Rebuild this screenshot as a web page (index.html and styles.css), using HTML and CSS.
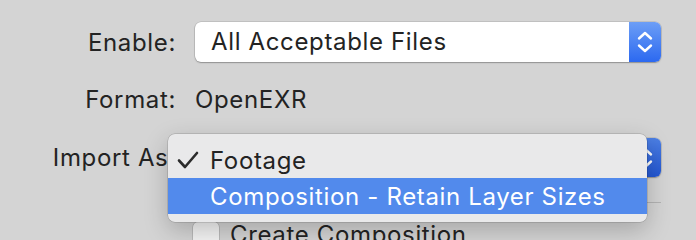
FILE: index.html
```html
<!DOCTYPE html>
<html>
<head>
<meta charset="utf-8">
<link rel="stylesheet" href="styles.css">
</head>
<body>
<div class="form">
  <div class="label">Enable:</div>
  <div class="popup">
    <div class="popup-value">All Acceptable Files</div>
    <div class="stepper">
      <svg width="16" height="22" viewBox="0 0 16 22"><path d="M2 7.5 L8 2 L14 7.5 M2 14.5 L8 20 L14 14.5" fill="none" stroke="#fff" stroke-width="2.4" stroke-linecap="round" stroke-linejoin="round"/></svg>
    </div>
  </div>

  <div class="label label-format">Format:</div>
  <div class="value">OpenEXR</div>

  <div class="label label-import">Import As:</div>
  <div class="popup-wrap">
    <div class="popup popup-dim">
      <div class="popup-value"></div>
      <div class="stepper stepper-dim">
        <svg width="16" height="22" viewBox="0 0 16 22"><path d="M2 7.5 L8 2 L14 7.5 M2 14.5 L8 20 L14 14.5" fill="none" stroke="#fff" stroke-width="2.4" stroke-linecap="round" stroke-linejoin="round"/></svg>
      </div>
    </div>
    <div class="separator"></div>
    <div class="menu">
      <div class="menu-item">
        <span class="check"><svg width="22" height="18" viewBox="0 0 22 18"><path d="M2 9.5 L8 16 L20 2" fill="none" stroke="#2b2b2b" stroke-width="2.6" stroke-linecap="round" stroke-linejoin="round"/></svg></span>
        <span>Footage</span>
      </div>
      <div class="menu-item selected">
        <span class="check"></span>
        <span>Composition - Retain Layer Sizes</span>
      </div>
    </div>
  </div>

  <div></div>
  <div class="checkrow">
    <span class="checkbox"></span>
    <span>Create Composition</span>
  </div>
</div>
</body>
</html>
```
FILE: styles.css
```css
html, body {
  margin: 0;
  padding: 0;
  background: #d4d4d4;
  width: 696px;
  height: 240px;
  overflow: hidden;
  font-family: Inter, "Noto Sans", sans-serif;
  font-size: 24px;
  letter-spacing: 0.65px;
  color: #232323;
}

.form {
  display: grid;
  grid-template-columns: 176px 466px;
  column-gap: 19px;
  padding-top: 22px;
  align-items: center;
}

.label {
  text-align: right;
  white-space: nowrap;
}

.popup {
  height: 40px;
  display: flex;
  background: #fff;
  border-radius: 6px;
  box-shadow: 0 0 0 0.5px rgba(0,0,0,0.18), 0 1px 1.5px rgba(0,0,0,0.25);
  overflow: hidden;
}

.popup-value {
  flex: 1;
  padding-left: 16px;
  line-height: 40px;
  white-space: nowrap;
}

.stepper {
  width: 32px;
  background: linear-gradient(#6c9ef6, #2c69f0);
  display: flex;
  align-items: center;
  justify-content: center;
}

.stepper-dim {
  background: linear-gradient(#4c7fe4, #2256d2);
}

.label-format, .value {
  margin-top: 21px;
  height: 34px;
  line-height: 34px;
}

.label-import {
  margin-top: 21px;
  align-self: start;
  line-height: 39px;
}

.popup-wrap {
  position: relative;
  margin-top: 21px;
}

.popup-dim {
  height: 39px;
}

.separator {
  height: 1px;
  background: #b3b3b3;
  margin-top: 25px;
}

.menu {
  position: absolute;
  left: -27px;
  top: -4px;
  width: 479px;
  padding: 8px 0;
  background: #e9e9ea;
  border-radius: 7px;
  box-shadow: 0 0 0 0.5px rgba(0,0,0,0.22), 0 8px 24px rgba(0,0,0,0.22);
}

.menu-item {
  height: 36px;
  display: flex;
  align-items: center;
  white-space: nowrap;
}

.menu-item.selected {
  background: #528aec;
  color: #fff;
}

.check {
  width: 42px;
  padding-left: 9px;
  box-sizing: border-box;
  display: flex;
  align-items: center;
}

.checkrow {
  margin-top: 17px;
  height: 30px;
  line-height: 30px;
  display: flex;
  align-items: center;
  gap: 11px;
  white-space: nowrap;
  align-self: start;
}

.checkbox {
  width: 26px;
  height: 26px;
  border-radius: 5px;
  background: #f4f4f4;
  box-shadow: 0 0 0 0.5px rgba(0,0,0,0.2), 0 1px 1px rgba(0,0,0,0.2);
  margin-left: -2px;
}
```
